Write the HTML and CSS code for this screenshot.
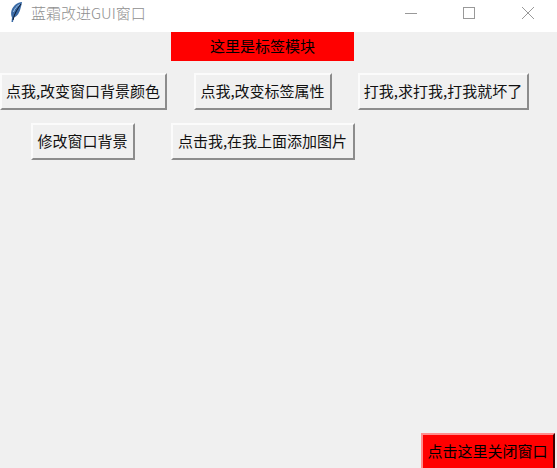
FILE: index.html
```html
<!DOCTYPE html>
<html lang="zh-CN">
<head>
<meta charset="utf-8">
<title>蓝霜改进GUI窗口</title>
<link rel="stylesheet" href="styles.css">
</head>
<body>
<div class="window">
  <header class="titlebar">
    <svg class="feather" width="14" height="22" viewBox="0 0 14 22"><path d="M13 1C8.500 1.500 4 4.500 2.500 9.500 1.800 12 2 14.500 3 16.500L2.500 21 4 21 4.800 16.500C8.500 15.500 10.500 11.500 11.500 7.500 12 5.500 12.800 3 13 1Z" fill="#3a6aa5"/><path d="M12 3C9 7 5.500 12 4 19" stroke="#0c1a30" stroke-width="1" fill="none"/><path d="M10.500 3.500C8 5 5.500 7.500 4.500 11" stroke="#a6c8ea" stroke-width="1" fill="none"/></svg>
    <span class="title">蓝霜改进GUI窗口</span>
    <div class="controls">
      <span class="ctl"><svg width="12" height="12" viewBox="0 0 12 12"><path d="M0 6.500H12" stroke="#999" stroke-width="1"/></svg></span>
      <span class="ctl"><svg width="12" height="12" viewBox="0 0 12 12"><rect x=".5" y=".5" width="11" height="11" fill="none" stroke="#999"/></svg></span>
      <span class="ctl"><svg width="12" height="12" viewBox="0 0 12 12"><path d="M0 0L12 12M12 0L0 12" stroke="#999" stroke-width="1"/></svg></span>
    </div>
  </header>
  <main class="content">
    <div class="label">这里是标签模块</div>
    <div class="row row-a">
      <button class="btn w-167">点我,改变窗口背景颜色</button>
      <button class="btn w-138">点我,改变标签属性</button>
      <button class="btn w-171">打我,求打我,打我就坏了</button>
    </div>
    <div class="row row-b">
      <button class="btn w-104">修改窗口背景</button>
      <button class="btn w-184">点击我,在我上面添加图片</button>
    </div>
    <div class="footer">
      <button class="btn close">点击这里关闭窗口</button>
    </div>
  </main>
</div>
</body>
</html>
```
FILE: styles.css
```css
* { box-sizing: border-box; }
html, body { margin: 0; padding: 0; }
body { width: 557px; height: 468px; overflow: hidden; font-family: "Noto Sans CJK SC", "Liberation Sans", sans-serif; }
.window { display: flex; flex-direction: column; height: 468px; background: #f0f0f0; }
.titlebar { display: flex; align-items: flex-start; height: 32px; background: #fff; padding: 1px 0 0 9px; flex: none; }
.feather { flex: none; }
.title { margin-left: 8px; font-size: 15px; font-weight: 300; color: #8f8f8f; line-height: 24px; }
.controls { margin-left: auto; display: flex; }
.ctl { width: 58.5px; height: 24px; display: flex; align-items: center; justify-content: center; }
.content { flex: 1; display: flex; flex-direction: column; }
.label { width: 183px; height: 29px; margin-left: 171px; background: #ff0000; color: #000; font-size: 15px; line-height: 27px; text-align: center; }
.row { display: flex; height: 37px; }
.row-a { margin-top: 12px; gap: 27px; }
.row-a .w-171 { margin-left: -1px; }
.row-b { margin-top: 13px; padding-left: 31px; gap: 36px; }
.btn { height: 37px; padding: 0 1px 2px 0; background: #f0f0f0; color: #111; font: inherit; font-size: 15px; line-height: 1; border-style: solid; border-color: #fbfbfb #8c8c8c #8c8c8c #fbfbfb; border-width: 2px; }
.w-167 { width: 167px; }
.w-138 { width: 138px; }
.w-171 { width: 171px; }
.w-104 { width: 104px; }
.w-184 { width: 184px; }
.footer { margin-top: auto; display: flex; justify-content: flex-end; padding-right: 2px; }
.close { width: 134px; height: 35px; background: #ff0000; color: #000; border-color: #ff8c8c #400000 #ff0000 #ff8c8c; border-width: 2px 2px 0 2px; }
```
